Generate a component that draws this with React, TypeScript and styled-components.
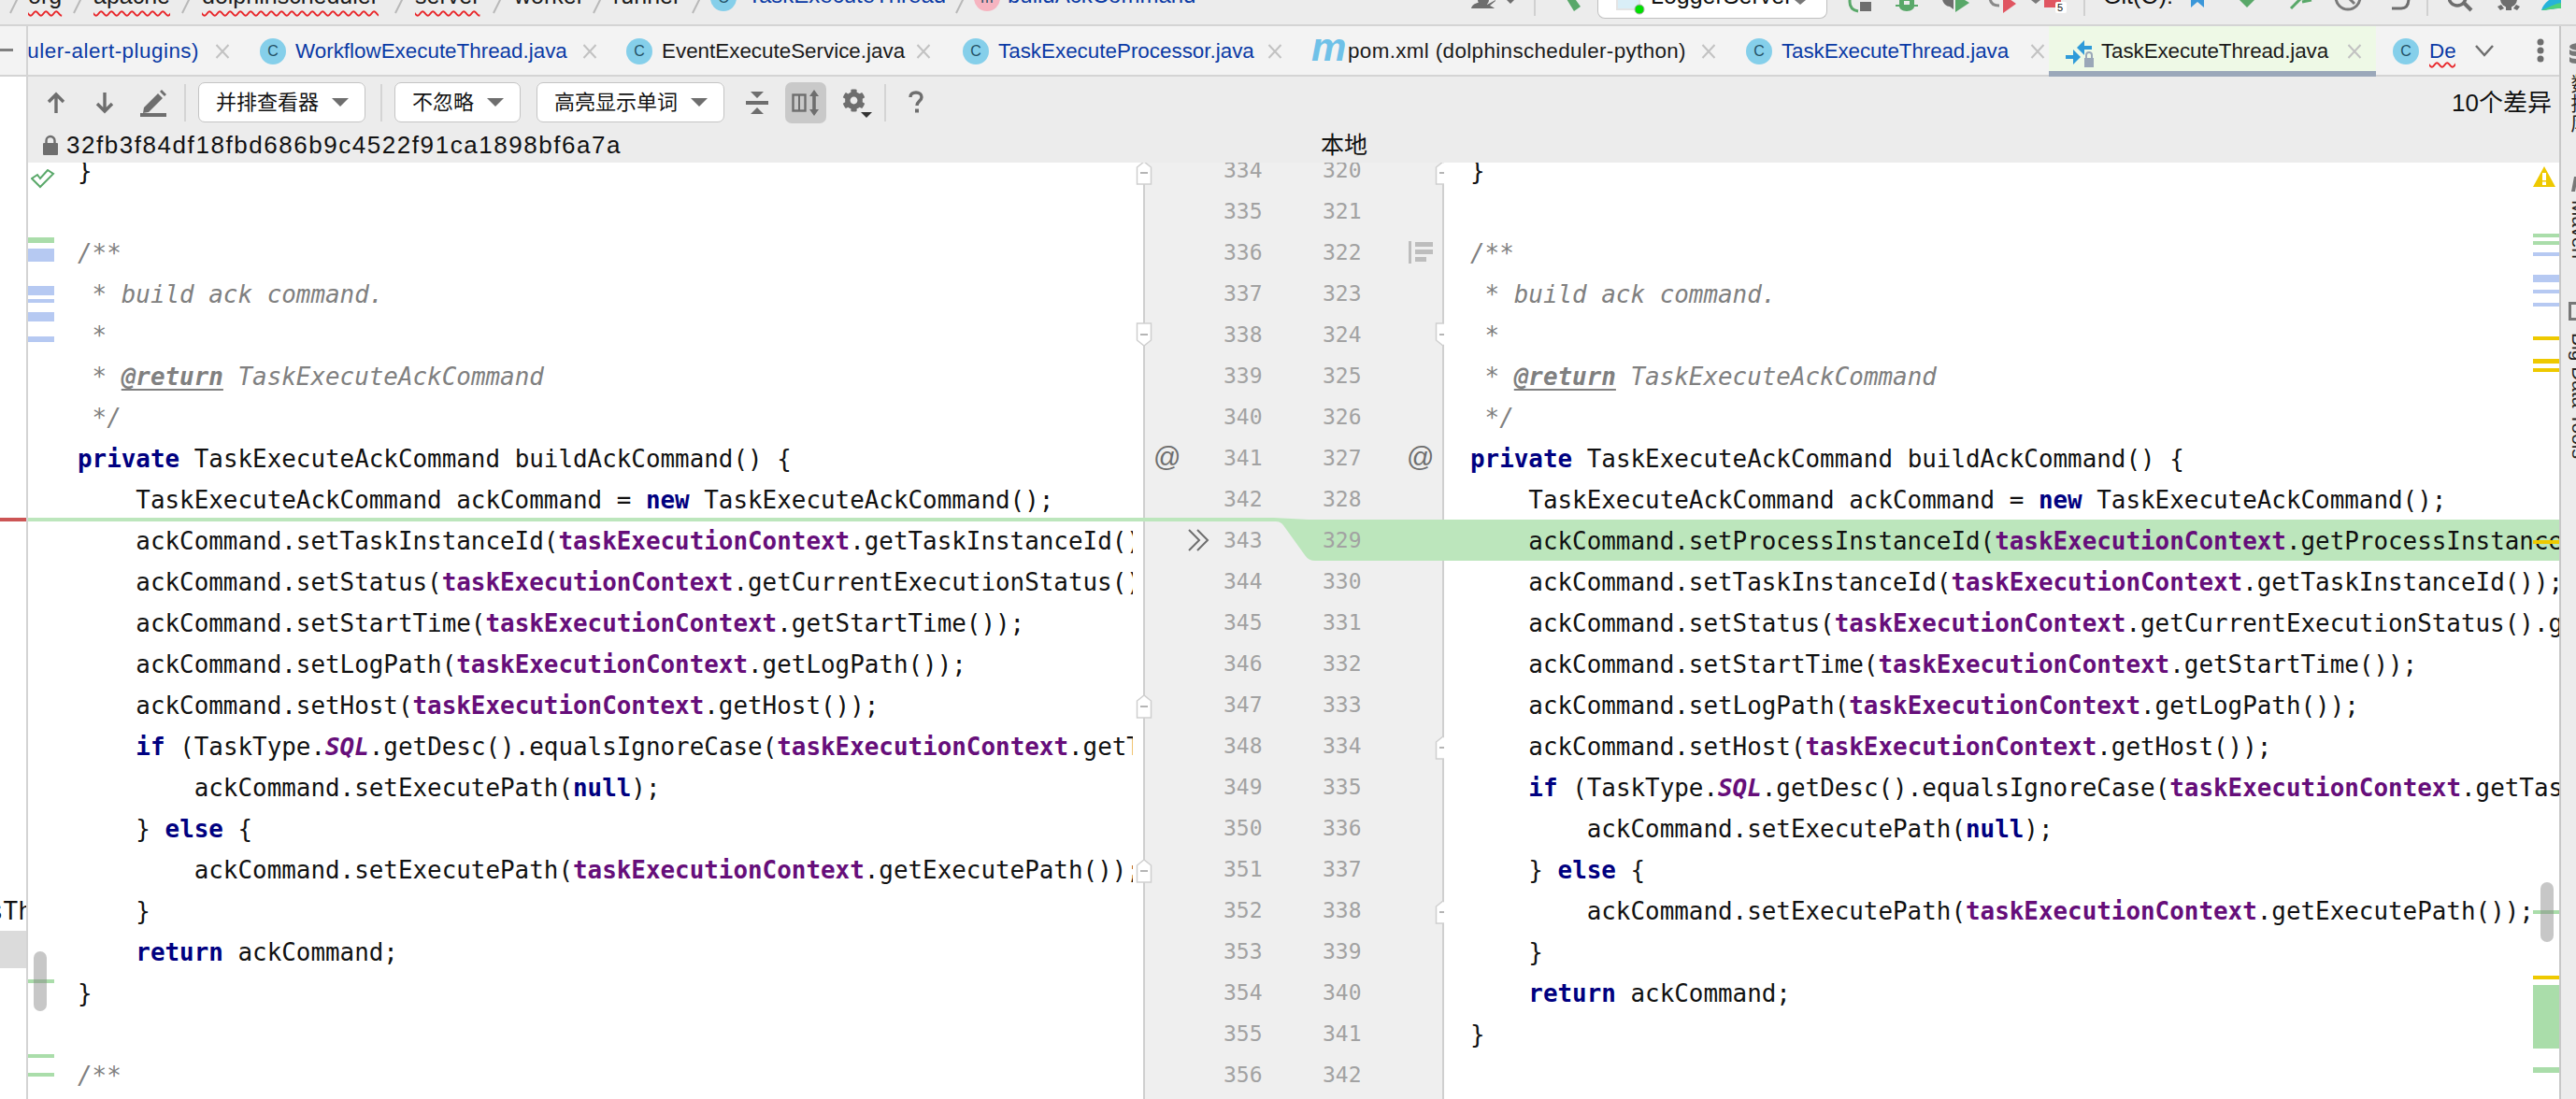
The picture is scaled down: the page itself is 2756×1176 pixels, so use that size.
import React from "react";
import styled, { createGlobalStyle } from "styled-components";
import { FaCog } from "react-icons/fa";

const Global = createGlobalStyle`
  html, body { margin: 0; padding: 0; background: #fff; }
  body { font-family: "Liberation Sans", "Noto Sans CJK SC", sans-serif; }
`;

const MONO = `"DejaVu Sans Mono", "Liberation Mono", monospace`;
const UI = `"Liberation Sans", "Noto Sans CJK SC", sans-serif`;

const Root = styled.div`
  width: 2756px; height: 1176px; display: flex; flex-direction: column; overflow: hidden; background: #ececec; color: #000;
`;

/* top navigation bar */
const TopBar = styled.div`
  height: 26px; flex: none; display: flex; align-items: flex-start; overflow: hidden; background: #ececec;
  border-bottom: 2px solid #d4d4d4; box-sizing: content-box;
`;
const Crumb = styled.span<{ $w: number; $link?: boolean; $wavy?: boolean; $ml?: number }>`
  flex: none; width: ${(p) => p.$w}px; margin-top: -17px; margin-left: ${(p) => p.$ml ?? 0}px; font: ${(p) => (p.$link ? 24 : 25)}px/24px ${UI};
  white-space: nowrap; color: ${(p) => (p.$link ? "#0a3aa5" : "#1c1c1c")};
  text-decoration: ${(p) => (p.$wavy ? "underline wavy #e8262a 2px" : "none")}; text-underline-offset: 7px;
  text-decoration-skip-ink: none;
`;
const TopIcon = styled.svg<{ $ml?: number }>`
  flex: none; height: 26px; margin-left: ${(p) => p.$ml ?? 0}px; display: block;
`;
const RunCombo = styled.div`
  flex: none; margin-left: 17px; width: 246px; height: 20px; box-sizing: border-box; background: #fff; border: 1px solid #c0c0c0; border-top: none;
  border-radius: 0 0 8px 8px; display: flex; align-items: flex-start; position: relative; overflow: hidden;
`;
const ComboText = styled.span`
  margin-left: 56px; margin-top: -17px; font: 25px/24px ${UI}; color: #111; white-space: nowrap;
`;
const ComboGlyph = styled.svg<{ $side: "left" | "right"; $at: number }>`
  position: absolute; ${(p) => p.$side}: ${(p) => p.$at}px; top: 0; display: block;
`;
const GitLabel = styled.span`
  flex: none; margin-left: 19px; width: 67px; margin-top: -17px; font: 25px/24px ${UI}; color: #111; white-space: nowrap;
`;
const RoundIcon = styled.span<{ $bg: string; $ml?: number; $top?: number }>`
  flex: none; width: 28px; height: 28px; border-radius: 50%; background: ${(p) => p.$bg}; margin-left: ${(p) => p.$ml ?? 0}px;
  margin-top: ${(p) => p.$top ?? 0}px; display: flex; align-items: center; justify-content: center; color: #234f63;
  font: 16px/28px ${UI};
`;

/* columns below the top bar */
const Columns = styled.div`
  flex: 1; display: flex; min-height: 0;
`;
const LeftStrip = styled.div`
  flex: none; width: 28px; border-right: 2px solid #d4d4d4; background: #fff; display: flex; flex-direction: column; overflow: hidden;
`;
const StripTab = styled.div`
  flex: none; height: 52px; background: #f3f3f3; border-bottom: 2px solid #d4d4d4; display: flex; align-items: center;
`;
const StripDash = styled.div`
  width: 14px; height: 3px; background: #808080; margin-top: -1px;
`;
const RedLine = styled.div`
  flex: none; margin-top: 472px; height: 4px; background: #cc5555;
`;
const StripText = styled.div`
  flex: none; margin-top: 394px; height: 44px; font: 25.9px/47px ${MONO}; white-space: nowrap; margin-left: -12px; color: #111;
`;
const StripBlock = styled.div`
  flex: none; height: 40px; background: #dbdbdb;
`;
const Main = styled.div`
  flex: none; width: 2708px; display: flex; flex-direction: column; min-height: 0;
`;
const RightStrip = styled.div`
  flex: none; width: 16px; border-left: 2px solid #c8c8c8; background: #ececec; overflow: hidden; display: flex; flex-direction: column; align-items: flex-start;
`;
const SideIcon = styled.svg<{ $mt: number }>`
  flex: none; margin-top: ${(p) => p.$mt}px; margin-left: 8px; display: block;
`;
const SideText = styled.span<{ $mt: number }>`
  flex: none; margin-top: ${(p) => p.$mt}px; margin-left: 7px; writing-mode: vertical-rl; font: 21px/24px ${UI}; color: #222; white-space: nowrap;
`;

/* tabs */
const TabBar = styled.div`
  flex: none; height: 52px; background: #f3f3f3; border-bottom: 2px solid #d4d4d4; display: flex; align-items: stretch;
`;
const Tab = styled.div<{ $w: number; $active?: boolean }>`
  flex: none; width: ${(p) => p.$w}px; box-sizing: border-box; display: flex; align-items: center; padding-left: 18px;
  height: 54px; overflow: hidden;
  ${(p) => (p.$active ? "background:#eef9e6; border-bottom:6px solid #9ba8ba; padding-top:6px;" : "")}
`;
const TabClip = styled(Tab)`
  justify-content: flex-end; padding-left: 0; padding-right: 14px;
`;
const TabName = styled.span<{ $blue?: boolean; $gap?: number; $ls?: number }>`
  font: 22.4px/30px ${UI}; white-space: nowrap; margin-left: ${(p) => p.$gap ?? 10}px; color: ${(p) => (p.$blue ? "#0a3aa5" : "#1a1a1a")};
  flex: none; letter-spacing: ${(p) => p.$ls ?? 0}px;
`;
const TabCut = styled.span`
  font: 22.4px/30px ${UI}; color: #0a3aa5; width: 28px; margin-left: 11px; overflow: hidden; flex: none; white-space: nowrap;
  text-decoration: underline wavy #e8262a 2px; text-underline-offset: 4px; text-decoration-skip-ink: none; padding-bottom: 4px; margin-top: 4px;
`;
const CloseIcon = styled.svg<{ $ml?: number }>`
  flex: none; margin-left: ${(p) => p.$ml ?? 16}px; display: block;
`;
const MavenM = styled.span`
  flex: none; width: 30px; font: italic bold 42px/40px ${UI}; color: #6fc1e8; margin-top: -8px;
`;
const TabTail = styled.div`
  flex: 1; display: flex; align-items: center; padding-left: 8px;
`;
const TabGlyph = styled.svg<{ $ml?: number; $mt?: number }>`
  flex: none; display: block; margin-left: ${(p) => p.$ml ?? 0}px; margin-top: ${(p) => p.$mt ?? 0}px;
`;

/* toolbar */
const Toolbar = styled.div`
  flex: none; height: 50px; box-sizing: border-box; display: flex; align-items: center; padding: 5px 0 0 20px; background: #ececec;
`;
const ToolSvg = styled.svg<{ $ml?: number }>`
  flex: none; margin-left: ${(p) => p.$ml ?? 0}px; display: block;
`;
const ToolSep = styled.div<{ $ml: number }>`
  flex: none; width: 2px; height: 40px; background: #d4d4d4; margin-left: ${(p) => p.$ml}px;
`;
const Combo = styled.div<{ $w: number; $ml: number }>`
  flex: none; width: ${(p) => p.$w}px; margin-left: ${(p) => p.$ml}px; height: 43px; box-sizing: border-box; background: #fff;
  border: 1px solid #c4c4c4; border-radius: 7px; display: flex; align-items: center; justify-content: space-between;
  padding: 0 17px 0 18px; font: 22px/28px ${UI}; color: #111; white-space: nowrap;
`;
const ComboArrow = styled.i`
  flex: none; width: 0; height: 0; border-left: 9px solid transparent; border-right: 9px solid transparent; border-top: 9px solid #6e6e6e; display: block;
`;
const ActiveTool = styled.div`
  flex: none; margin-left: 18px; width: 44px; height: 44px; border-radius: 7px; background: #c9c9c9; display: flex; align-items: center; justify-content: center;
`;
const GearWrap = styled.div`
  flex: none; margin-left: 17px; width: 30px; height: 34px; position: relative; color: #6e6e6e; font-size: 25px; line-height: 0; padding-top: 2px; box-sizing: border-box;
`;
const GearCaret = styled.i`
  position: absolute; right: -2px; bottom: 1px; width: 0; height: 0; border-left: 6px solid transparent; border-right: 6px solid transparent; border-top: 6px solid #333;
`;
const DiffCount = styled.div`
  margin-left: auto; margin-right: 8px; font: 26px/34px ${UI}; color: #111; white-space: nowrap;
`;

/* hash / label row */
const InfoRow = styled.div`
  flex: none; height: 42px; box-sizing: border-box; padding-top: 3px; display: flex; align-items: center; background: #ececec;
`;
const HashCell = styled.div`
  flex: none; width: 1383px; display: flex; align-items: center; padding-left: 16px; box-sizing: border-box;
`;
const LockGlyph = styled.svg`
  flex: none; display: block;
`;
const HashText = styled.span`
  margin-left: 9px; font: 26px/30px ${UI}; color: #111; letter-spacing: 1.55px; white-space: nowrap;
`;
const LocalLabel = styled.span`
  font: 25px/30px ${UI}; color: #111;
`;

/* diff */
const DiffBody = styled.div`
  flex: 1; min-height: 0; display: flex; position: relative; overflow: hidden; background: #fff;
`;
const Pane = styled.div<{ $pad: number }>`
  flex: none; width: 1193px; position: relative; overflow: hidden; background: #fff; font: 25.9px/47px ${MONO}; color: #111;
  --pad: ${(p) => p.$pad}px;
`;
const CodeClip = styled.div<{ $w: number }>`
  width: ${(p) => p.$w}px; margin-top: -14px; overflow: hidden;
`;
const CodeRow = styled.div<{ $added?: boolean }>`
  height: 44px; white-space: pre; padding-left: var(--pad); background: ${(p) => (p.$added ? "#bce6bc" : "transparent")};
`;
const K = styled.span` color: #000080; font-weight: bold; `;
const F = styled.span` color: #660e7a; font-weight: bold; `;
const SF = styled.span` color: #660e7a; font-weight: bold; font-style: italic; `;
const Cm = styled.span` color: #808080; font-style: italic; `;
const Tag = styled.span` color: #808080; font-style: italic; font-weight: bold; text-decoration: underline; text-underline-offset: 4px; `;

const Marker = styled.div<{ $top: number; $h: number; $c: string; $side: "left" | "right" }>`
  position: absolute; ${(p) => p.$side}: 0; width: 28px; top: ${(p) => p.$top - 174}px; height: ${(p) => p.$h}px; background: ${(p) => p.$c};
`;
const Thumb = styled.div<{ $top: number; $side: "left" | "right" }>`
  position: absolute; ${(p) => p.$side}: 6px; width: 14px; top: ${(p) => p.$top - 174}px; height: 64px; border-radius: 7px; background: rgba(130,130,130,.45);
`;
const AddLine = styled.div`
  position: absolute; left: 0; right: 0; top: 380px; height: 4px; background: #bce6bc;
`;
const Overlay = styled.svg<{ $top: number; $l?: number; $r?: number }>`
  position: absolute; top: ${(p) => p.$top - 174}px; display: block;
  ${(p) => (p.$l !== undefined ? `left:${p.$l}px;` : "")} ${(p) => (p.$r !== undefined ? `right:${p.$r}px;` : "")}
`;

const Gutter = styled.div`
  flex: none; width: 322px; box-sizing: border-box; border-left: 2px solid #cfcfcf; border-right: 2px solid #cfcfcf; background: #efefef; position: relative;
`;
const Band = styled.svg`
  position: absolute; left: -2px; top: 378px; display: block;
`;
const GutterRows = styled.div`
  position: relative; margin-top: -14px;
`;
const GutterRow = styled.div`
  height: 44px; display: grid; grid-template-columns: 84px 42px 64px 42px 1fr; align-items: center;
  font: 23px/44px ${MONO}; color: #a2a2a2;
`;
const GutterCell = styled.div<{ $pl: number }>`
  display: flex; align-items: center; height: 44px; padding-left: ${(p) => p.$pl}px; color: #6e6e6e;
`;
const AtSign = styled.span`
  font: 29px/44px ${UI}; color: #6e6e6e; margin-top: -3px;
`;
const Fold = styled.svg<{ $top: number; $side: "left" | "right" }>`
  position: absolute; ${(p) => p.$side}: -10px; top: ${(p) => p.$top - 174}px; display: block;
`;

const X = ({ ml }: { ml?: number }) => (
  <CloseIcon $ml={ml} width="16" height="16" viewBox="0 0 16 16">
    <path d="M1.5 1 14.5 15M14.5 1 1.5 15" stroke="#c2c2c2" strokeWidth="2" fill="none" />
  </CloseIcon>
);

const ClassIcon = ({ ml }: { ml?: number }) => <RoundIcon $bg="#85cfea" $ml={ml}>C</RoundIcon>;

const Slash = ({ w }: { w: number }) => (
  <TopIcon width={w} viewBox={`0 0 ${w} 26`}>
    <path d={`M${w / 2 + 4} -2 ${w / 2 - 4} 14`} stroke="#b8b8b8" strokeWidth="2" fill="none" />
  </TopIcon>
);

type Tok = React.ReactNode;
const sharedHead: Tok[] = [
  "}",
  "",
  <Cm>/**</Cm>,
  <Cm> * build ack command.</Cm>,
  <Cm> *</Cm>,
  <Cm> * <Tag>@return</Tag> TaskExecuteAckCommand</Cm>,
  <Cm> */</Cm>,
  <><K>private</K> TaskExecuteAckCommand buildAckCommand() {"{"}</>,
  <>    TaskExecuteAckCommand ackCommand = <K>new</K> TaskExecuteAckCommand();</>,
];
const sharedTail: Tok[] = [
  <>    ackCommand.setTaskInstanceId(<F>taskExecutionContext</F>.getTaskInstanceId());</>,
  <>    ackCommand.setStatus(<F>taskExecutionContext</F>.getCurrentExecutionStatus().getCode());</>,
  <>    ackCommand.setStartTime(<F>taskExecutionContext</F>.getStartTime());</>,
  <>    ackCommand.setLogPath(<F>taskExecutionContext</F>.getLogPath());</>,
  <>    ackCommand.setHost(<F>taskExecutionContext</F>.getHost());</>,
  <>    <K>if</K> (TaskType.<SF>SQL</SF>.getDesc().equalsIgnoreCase(<F>taskExecutionContext</F>.getTaskType())) {"{"}</>,
  <>        ackCommand.setExecutePath(<K>null</K>);</>,
  <>    {"} "}<K>else</K> {"{"}</>,
  <>        ackCommand.setExecutePath(<F>taskExecutionContext</F>.getExecutePath());</>,
  <>    {"}"}</>,
  <>    <K>return</K> ackCommand;</>,
  "}",
  "",
];
const leftRows: Tok[] = [...sharedHead, ...sharedTail, <Cm>/**</Cm>];
const rightRows: Tok[] = [
  ...sharedHead,
  <>    ackCommand.setProcessInstanceId(<F>taskExecutionContext</F>.getProcessInstanceId());</>,
  ...sharedTail,
];

const G = "#aaddaa", B = "#b6c9f2", Y = "#eec900";
const leftMarks: [number, number, string][] = [
  [254, 6, G], [266, 14, B], [306, 10, B], [320, 4, B], [334, 10, B], [360, 6, B],
  [1048, 4, G], [1128, 4, G], [1148, 4, G],
];
const rightMarks: [number, number, string][] = [
  [250, 4, G], [258, 4, G], [270, 4, B], [294, 8, B], [310, 4, B], [324, 4, B],
  [360, 4, Y], [384, 5, Y], [394, 4, Y], [578, 4, Y], [974, 4, G], [1044, 4, Y], [1054, 68, G], [1142, 6, G],
];

const FoldMark = ({ top, side, up }: { top: number; side: "left" | "right"; up?: boolean }) => (
  <Fold $top={top} $side={side} width="18" height="26" viewBox="0 0 18 26">
    <path
      d={up ? "M1.5 7 9 1l7.5 6V25h-15Z" : "M1.5 1h15v18L9 25l-7.5-6Z"}
      fill="#fff"
      stroke="#cfcfcf"
      strokeWidth="1.5"
    />
    <path d="M5 13h8" stroke="#b5b5b5" strokeWidth="2" />
  </Fold>
);

export default function App() {
  return (
    <Root>
      <Global />
      <TopBar>
        <Slash w={30} />
        <Crumb $w={36} $wavy>org</Crumb>
        <Slash w={34} />
        <Crumb $w={82} $wavy>apache</Crumb>
        <Slash w={34} />
        <Crumb $w={194} $wavy>dolphinscheduler</Crumb>
        <Slash w={34} />
        <Crumb $w={70} $wavy>server</Crumb>
        <Slash w={36} />
        <Crumb $w={72}>worker</Crumb>
        <Slash w={34} />
        <Crumb $w={74}>runner</Crumb>
        <Slash w={30} />
        <RoundIcon $bg="#85cfea" $top={-16}>C</RoundIcon>
        <Crumb $w={212} $link $ml={12}>TaskExecuteThread</Crumb>
        <Slash w={30} />
        <RoundIcon $bg="#f6b4c0" $top={-16}>m</RoundIcon>
        <Crumb $w={212} $link $ml={8}>buildAckCommand</Crumb>
        <TopIcon $ml={284} width="46" viewBox="0 0 46 26">
          <path d="M0 9c1-5 8-7 12-7l5 3 9-5v1l-6 5c2 1 4 2 5 3Z" fill="#6e6e6e" />
          <circle cx="13" cy="0" r="6" fill="#6e6e6e" />
          <path d="M38 0h8l-4 4Z" fill="#6e6e6e" />
        </TopIcon>
        <TopIcon $ml={21} width="2" viewBox="0 0 2 26"><rect width="2" height="17" fill="#d0d0d0" /></TopIcon>
        <TopIcon $ml={29} width="20" viewBox="0 0 20 26">
          <path d="M1-6 8-8 19 7 12 12Z" fill="#59a869" />
        </TopIcon>
        <RunCombo>
          <ComboGlyph $side="left" $at={18} width="48" height="20" viewBox="0 0 48 20">
            <rect x="2" y="-4" width="24" height="14" fill="#d9eef7" stroke="#e4e4e4" strokeWidth="2" />
            <circle cx="26" cy="10" r="5" fill="#00e000" stroke="#aaa" strokeWidth="1" />
          </ComboGlyph>
          <ComboText>LoggerServer</ComboText>
          <ComboGlyph $side="right" $at={22} width="12" height="6" viewBox="0 0 12 6">
            <path d="M0 0h12L6 5Z" fill="#777" />
          </ComboGlyph>
        </RunCombo>
        <TopIcon $ml={22} width="26" viewBox="0 0 26 26">
          <path d="M2 -4v6c0 6 3 9 9 10" stroke="#59a869" strokeWidth="3" fill="none" />
          <rect x="13" y="2" width="12" height="10" fill="#6e6e6e" />
        </TopIcon>
        <TopIcon $ml={24} width="26" viewBox="0 0 26 26">
          <path d="M5-4h16v9h4v2h-4c0 2-3 5-8 5s-8-3-8-5H1V5h4Z" fill="#59a869" />
          <rect x="10" y="1" width="6" height="4" fill="#ececec" />
        </TopIcon>
        <TopIcon $ml={24} width="30" viewBox="0 0 30 26">
          <path d="M1-2c0 5 4 9 8 9l4 3V-2Z" fill="#6e6e6e" />
          <path d="M15-6 30 3 15 13Z" fill="#59a869" />
        </TopIcon>
        <TopIcon $ml={20} width="60" viewBox="0 0 60 26">
          <path d="M2-3c0 7 4 9 10 9" stroke="#8a8a8a" strokeWidth="3" fill="none" />
          <path d="M16-6 30 4 16 14Z" fill="#e05561" />
          <path d="M46 0h10l-5 4Z" fill="#7a7a7a" />
        </TopIcon>
        <TopIcon $ml={0} width="30" viewBox="0 0 30 26">
          <rect y="-2" width="18" height="10" fill="#e05561" />
          <rect x="12" y="2" width="12" height="12" rx="2" fill="#fff" />
          <text x="14" y="12" fontSize="11" fontFamily="Liberation Sans" fill="#111">5</text>
        </TopIcon>
        <TopIcon $ml={12} width="2" viewBox="0 0 2 26"><rect width="2" height="17" fill="#d0d0d0" /></TopIcon>
        <GitLabel>Git(O):</GitLabel>
        <TopIcon $ml={27} width="16" viewBox="0 0 16 26">
          <path d="M0-4h14V8L7 2 0 8Z" fill="#3b97d9" />
        </TopIcon>
        <TopIcon $ml={34} width="20" viewBox="0 0 20 26">
          <path d="M0-2 10 8 20-2Z" fill="#59a869" />
        </TopIcon>
        <TopIcon $ml={35} width="26" viewBox="0 0 26 26">
          <path d="M2 9 16-5" stroke="#59a869" strokeWidth="3" fill="none" />
          <path d="M14 2l10-2" stroke="#59a869" strokeWidth="3" fill="none" />
        </TopIcon>
        <TopIcon $ml={22} width="30" viewBox="0 0 30 26">
          <circle cx="15" cy="-3" r="13" stroke="#7a7a7a" strokeWidth="3" fill="none" />
          <path d="M15-3 22 4" stroke="#7a7a7a" strokeWidth="3" />
        </TopIcon>
        <TopIcon $ml={32} width="20" viewBox="0 0 20 26">
          <path d="M0 9h10c6 0 8-4 8-11" stroke="#6e6e6e" strokeWidth="3" fill="none" />
        </TopIcon>
        <TopIcon $ml={17} width="2" viewBox="0 0 2 26"><rect width="2" height="17" fill="#d0d0d0" /></TopIcon>
        <TopIcon $ml={21} width="30" viewBox="0 0 30 26">
          <circle cx="10" cy="-3" r="9" stroke="#6e6e6e" strokeWidth="3.5" fill="none" />
          <path d="M17 3 25 11" stroke="#6e6e6e" strokeWidth="4" />
        </TopIcon>
        <TopIcon $ml={20} width="30" viewBox="0 0 30 26">
          <circle cx="15" cy="-1" r="9" fill="#6e6e6e" />
          <path d="M7 5 3 7l3 4 4-2M23 5l4 2-3 4-4-2M12 6h6v5h-6Z" fill="#6e6e6e" />
        </TopIcon>
        <TopIcon $ml={20} width="21" viewBox="0 0 21 26">
          <path d="M0 11C2 4 8-2 21-6V9C12 9 6 11 0 11Z" fill="#26b3d9" />
          <path d="M0 11C8 8 14 4 21 3V9C12 9 6 11 0 11Z" fill="#4fd27a" />
        </TopIcon>
      </TopBar>

      <Columns>
        <LeftStrip>
          <StripTab><StripDash /></StripTab>
          <RedLine />
          <StripText>sTh</StripText>
          <StripBlock />
        </LeftStrip>

        <Main>
          <TabBar>
            <TabClip $w={230}>
              <TabName $blue $gap={0} $ls={0.5}>(dolphinscheduler-alert-plugins)</TabName>
              <X ml={17} />
            </TabClip>
            <Tab $w={392}><ClassIcon /><TabName $blue>WorkflowExecuteThread.java</TabName><X /></Tab>
            <Tab $w={360}><ClassIcon /><TabName>EventExecuteService.java</TabName><X ml={12} /></Tab>
            <Tab $w={373}><ClassIcon /><TabName $blue>TaskExecuteProcessor.java</TabName><X ml={14} /></Tab>
            <Tab $w={465}><MavenM>m</MavenM><TabName $gap={9} $ls={0.37}>pom.xml (dolphinscheduler-python)</TabName><X /></Tab>
            <Tab $w={342}><ClassIcon /><TabName $blue $ls={-0.1}>TaskExecuteThread.java</TabName><X ml={23} /></Tab>
            <Tab $w={350} $active>
              <TabGlyph $mt={4} width="32" height="32" viewBox="0 0 32 32">
                <path d="M0 18h8v-6l8 8-8 8v-6H0Z" fill="#2f9bd9" />
                <path d="M28 8h-8V2l-8 8 8 8v-6h8Z" fill="#2f9bd9" />
                <rect x="20" y="21" width="10" height="10" fill="#9aa7b8" />
                <path d="M22 21v-3a3 3 0 0 1 6 0v3" fill="none" stroke="#9aa7b8" strokeWidth="2" />
              </TabGlyph>
              <TabName $gap={6} $ls={-0.1}>TaskExecuteThread.java</TabName>
              <X ml={20} />
            </Tab>
            <Tab $w={98}>
              <ClassIcon /><TabCut>DemoTask</TabCut>
            </Tab>
            <TabTail>
              <TabGlyph width="20" height="14" viewBox="0 0 20 14">
                <path d="M1 2 10 12 19 2" fill="none" stroke="#6e6e6e" strokeWidth="2.5" />
              </TabGlyph>
              <TabGlyph $ml={46} width="8" height="26" viewBox="0 0 8 26">
                <circle cx="4" cy="4" r="3.5" fill="#6e6e6e" />
                <circle cx="4" cy="13" r="3.5" fill="#6e6e6e" />
                <circle cx="4" cy="22" r="3.5" fill="#6e6e6e" />
              </TabGlyph>
            </TabTail>
          </TabBar>

          <Toolbar>
            <ToolSvg width="20" height="24" viewBox="0 0 20 24">
              <path d="M10 23V3M2 11l8-8 8 8" fill="none" stroke="#6e6e6e" strokeWidth="3.4" />
            </ToolSvg>
            <ToolSvg $ml={32} width="20" height="24" viewBox="0 0 20 24">
              <path d="M10 1v20M2 13l8 8 8-8" fill="none" stroke="#6e6e6e" strokeWidth="3.4" />
            </ToolSvg>
            <ToolSvg $ml={28} width="28" height="30" viewBox="0 0 28 30">
              <path d="M4 20 19 5l5 5L9 25l-6 1ZM21 3l2-2 5 5-2 2Z" fill="#6e6e6e" />
              <rect y="26" width="28" height="4" fill="#6e6e6e" />
            </ToolSvg>
            <ToolSep $ml={19} />
            <Combo $w={179} $ml={13}>并排查看器<ComboArrow /></Combo>
            <ToolSep $ml={16} />
            <Combo $w={135} $ml={13}>不忽略<ComboArrow /></Combo>
            <Combo $w={201} $ml={17}>高亮显示单词<ComboArrow /></Combo>
            <ToolSvg $ml={23} width="24" height="26" viewBox="0 0 24 26">
              <path d="M5 1h14l-7 7ZM5 25h14l-7-7Z" fill="#6e6e6e" />
              <rect y="11" width="24" height="4" fill="#6e6e6e" />
            </ToolSvg>
            <ActiveTool>
              <ToolSvg width="30" height="28" viewBox="0 0 30 28">
                <rect x="1.5" y="5.5" width="13" height="17" fill="none" stroke="#6e6e6e" strokeWidth="2.4" />
                <path d="M8 5v18" stroke="#6e6e6e" strokeWidth="2" />
                <path d="M24 0l5 7h-3.2v14H29l-5 7-5-7h3.2V7H19Z" fill="#6e6e6e" />
              </ToolSvg>
            </ActiveTool>
            <GearWrap><FaCog /><GearCaret /></GearWrap>
            <ToolSep $ml={15} />
            <ToolSvg $ml={24} width="16" height="26" viewBox="0 0 16 26">
              <path d="M2 7c0-3.5 2.500-5 6-5s6 2 6 5c0 4-5 4-5 9" fill="none" stroke="#6e6e6e" strokeWidth="3.4" />
              <rect x="7" y="19.500" width="4" height="4" fill="#6e6e6e" />
            </ToolSvg>
            <DiffCount>10个差异</DiffCount>
          </Toolbar>

          <InfoRow>
            <HashCell>
              <LockGlyph width="16" height="22" viewBox="0 0 16 22">
                <rect y="9" width="16" height="13" rx="1" fill="#6e6e6e" />
                <path d="M3.500 10V6.500a4.500 4.500 0 0 1 9 0V10" fill="none" stroke="#6e6e6e" strokeWidth="2.4" />
              </LockGlyph>
              <HashText>32fb3f84df18fbd686b9c4522f91ca1898bf6a7a</HashText>
            </HashCell>
            <LocalLabel>本地</LocalLabel>
          </InfoRow>

          <DiffBody>
            <Pane $pad={53}>
              <CodeClip $w={1182}>
                {leftRows.map((r, i) => <CodeRow key={i}>{r}</CodeRow>)}
              </CodeClip>
              <AddLine />
              {leftMarks.map(([t, h, c], i) => <Marker key={i} $top={t} $h={h} $c={c} $side="left" />)}
              <Overlay $top={181} $l={3} width="26" height="22" viewBox="0 0 26 22">
                <path d="M1 10 10 19 24 5 18 1 10 10 7 6Z" fill="none" stroke="#59a869" strokeWidth="2" />
              </Overlay>
              <Thumb $top={1018} $side="left" />
            </Pane>

            <Gutter>
              <Band width="322" height="52" viewBox="0 0 322 52">
                <path d="M0 2H140L177 4H322V48H184Q177 48 173 42L150 10Q147 6 142 6H0Z" fill="#bce6bc" />
              </Band>
              <GutterRows>
                {Array.from({ length: 23 }, (_, i) => (
                  <GutterRow key={i}>
                    <GutterCell $pl={i === 7 ? 9 : 46}>
                      {i === 7 && <AtSign>@</AtSign>}
                      {i === 9 && (
                        <ToolSvg width="23" height="24" viewBox="0 0 23 24">
                          <path d="M1 1 12 12 1 23M10 1 21 12 10 23" fill="none" stroke="#6e6e6e" strokeWidth="2" />
                        </ToolSvg>
                      )}
                    </GutterCell>
                    <span>{334 + i}</span>
                    <span />
                    <span>{320 + i}</span>
                    <GutterCell $pl={i === 7 ? 48 : 50}>
                      {i === 7 && <AtSign>@</AtSign>}
                      {i === 2 && (
                        <ToolSvg width="26" height="24" viewBox="0 0 26 24">
                          <rect width="3" height="24" fill="#bdbdbd" />
                          <rect x="7" y="1" width="19" height="5" fill="#bdbdbd" />
                          <rect x="7" y="9" width="19" height="5" fill="#bdbdbd" />
                          <rect x="7" y="17" width="12" height="5" fill="#bdbdbd" />
                        </ToolSvg>
                      )}
                    </GutterCell>
                  </GutterRow>
                ))}
              </GutterRows>
              <FoldMark top={172} side="left" up />
              <FoldMark top={345} side="left" />
              <FoldMark top={743} side="left" up />
              <FoldMark top={919} side="left" up />
              <FoldMark top={172} side="right" up />
              <FoldMark top={345} side="right" />
              <FoldMark top={787} side="right" up />
              <FoldMark top={963} side="right" up />
            </Gutter>

            <Pane $pad={28}>
              <CodeClip $w={1193}>
                {rightRows.map((r, i) => <CodeRow key={i} $added={i === 9}>{r}</CodeRow>)}
              </CodeClip>
              {rightMarks.map(([t, h, c], i) => <Marker key={i} $top={t} $h={h} $c={c} $side="right" />)}
              <Overlay $top={178} $r={4} width="24" height="22" viewBox="0 0 24 22">
                <path d="M12 0 24 22H0Z" fill="#eec900" />
                <rect x="10" y="7" width="4" height="8" fill="#fff" />
                <rect x="10" y="16.500" width="4" height="3.500" fill="#fff" />
              </Overlay>
              <Thumb $top={944} $side="right" />
            </Pane>
          </DiffBody>
        </Main>

        <RightStrip>
          <SideIcon $mt={18} width="22" height="24" viewBox="0 0 22 24">
            <ellipse cx="11" cy="4" rx="10" ry="4" fill="#777" />
            <path d="M1 7c3 3 17 3 20 0v5c-3 3-17 3-20 0ZM1 15c3 3 17 3 20 0v5c-3 3-17 3-20 0Z" fill="#777" />
          </SideIcon>
          <SideText $mt={9}>数据库</SideText>
          <SideIcon $mt={41} width="22" height="24" viewBox="0 0 22 24">
            <path d="M3 22 6 6h4L7 22ZM10 22l3-16h4l-3 16Z" fill="#777" />
          </SideIcon>
          <SideText $mt={7}>Maven</SideText>
          <SideIcon $mt={46} width="22" height="20" viewBox="0 0 22 20">
            <path d="M1 1h12c5 0 8 4 8 9s-3 9-8 9H1Z" fill="none" stroke="#777" strokeWidth="4" />
          </SideIcon>
          <SideText $mt={13}>Big Data Tools</SideText>
        </RightStrip>
      </Columns>
    </Root>
  );
}
